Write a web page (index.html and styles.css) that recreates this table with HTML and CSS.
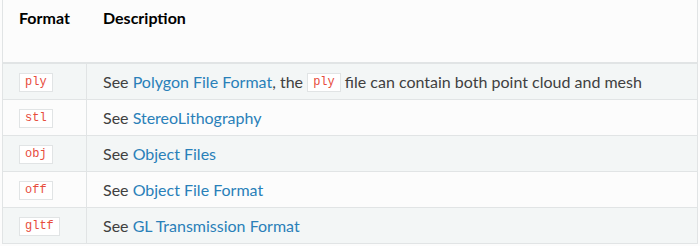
FILE: index.html
```html
<!DOCTYPE html>
<html>
<head>
<meta charset="utf-8">
<link rel="stylesheet" href="styles.css">
</head>
<body>
<div class="wrap">
<table class="docutils">
  <thead>
    <tr><th class="col-format">Format</th><th>Description</th></tr>
  </thead>
  <tbody>
    <tr><td><code>ply</code></td><td>See <a href="#">Polygon File Format</a>, the <code>ply</code> file can contain both point cloud and mesh</td></tr>
    <tr><td><code>stl</code></td><td>See <a href="#">StereoLithography</a></td></tr>
    <tr><td><code>obj</code></td><td>See <a href="#">Object Files</a></td></tr>
    <tr><td><code>off</code></td><td>See <a href="#">Object File Format</a></td></tr>
    <tr><td><code>gltf</code></td><td>See <a href="#">GL Transmission Format</a></td></tr>
  </tbody>
</table>
</div>
</body>
</html>
```

FILE: styles.css
```css
html, body {
  margin: 0;
  padding: 0;
  background: #fcfcfc;
}
body {
  font-family: Lato, "Noto Sans", sans-serif;
  color: #404040;
}
.wrap {
  padding-left: 2px;
}
.docutils {
  width: 696px;
  border-collapse: collapse;
  border-spacing: 0;
  border: 1px solid #e1e4e5;
  border-top: none;
  font-size: 16px;
}
.docutils th {
  font-weight: 700;
  color: #000;
  text-align: left;
  vertical-align: top;
  padding: 8px 16px;
  height: 46px;
  line-height: 19px;
  border-bottom: 2px solid #e1e4e5;
  border-left: 1px solid #fcfcfc;
  box-sizing: content-box;
}
.docutils th:first-child {
  border-left: none;
}
.docutils .col-format {
  width: 51px;
}
.docutils td {
  padding: 8px 16px;
  height: 19px;
  line-height: 19px;
  border-bottom: 1px solid #e1e4e5;
  border-left: 1px solid #e1e4e5;
  white-space: nowrap;
  vertical-align: middle;
}
.docutils tbody tr:nth-child(odd) td {
  background: #f3f6f6;
}
.docutils tbody tr:nth-child(even) td {
  background: #fcfcfc;
}
code {
  display: inline-block;
  vertical-align: top;
  margin-top: 1px;
  margin-bottom: -1px;
  font-family: "Liberation Mono", "DejaVu Sans Mono", monospace;
  font-size: 12px;
  line-height: 13px;
  color: #e74c3c;
  background: #fff;
  border: 1px solid #e1e4e5;
  padding: 2px 5px;
  white-space: nowrap;
}
a {
  color: #2980b9;
  text-decoration: none;
}
```
